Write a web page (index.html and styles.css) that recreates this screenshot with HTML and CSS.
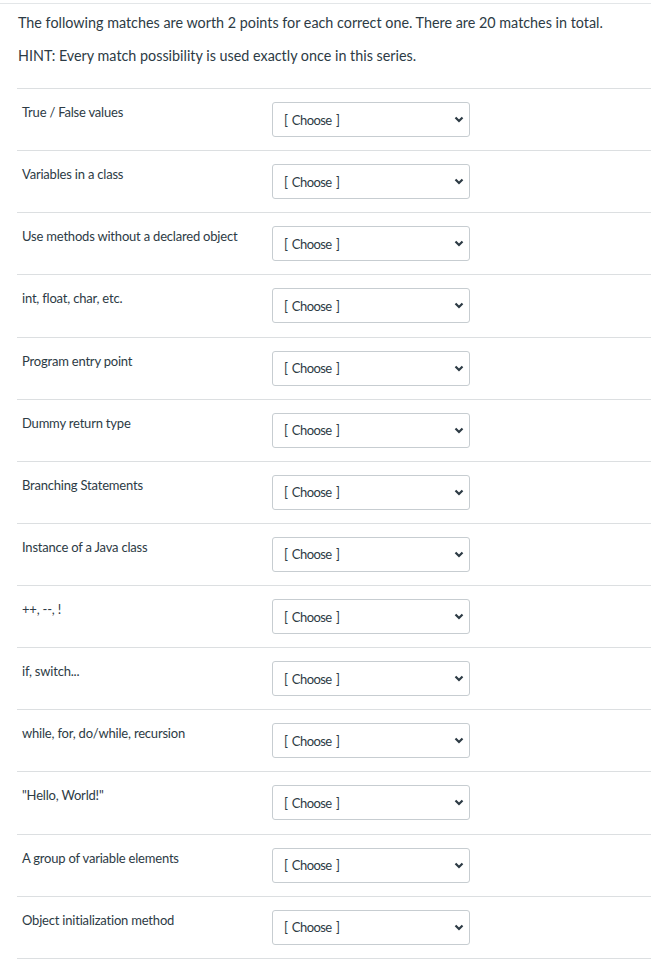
FILE: index.html
```html
<!DOCTYPE html>
<html>
<head>
<meta charset="utf-8">
<link rel="stylesheet" href="styles.css">
</head>
<body>
<div class="question">
  <div class="text">
    <p>The following matches are worth 2 points for each correct one. There are 20 matches in total.</p>
    <p>HINT: Every match possibility is used exactly once in this series.</p>
  </div>
  <div class="answers">
    <div class="row"><div class="label">True / False values</div><div class="select"><span>[ Choose ]</span><svg width="10" height="7" viewBox="0 0 10 7"><path d="M1.5 1.5 L5 5 L8.5 1.5" fill="none" stroke="#2d3b45" stroke-width="2.2"/></svg></div></div>
    <div class="row"><div class="label">Variables in a class</div><div class="select"><span>[ Choose ]</span><svg width="10" height="7" viewBox="0 0 10 7"><path d="M1.5 1.5 L5 5 L8.5 1.5" fill="none" stroke="#2d3b45" stroke-width="2.2"/></svg></div></div>
    <div class="row"><div class="label">Use methods without a declared object</div><div class="select"><span>[ Choose ]</span><svg width="10" height="7" viewBox="0 0 10 7"><path d="M1.5 1.5 L5 5 L8.5 1.5" fill="none" stroke="#2d3b45" stroke-width="2.2"/></svg></div></div>
    <div class="row"><div class="label">int, float, char, etc.</div><div class="select"><span>[ Choose ]</span><svg width="10" height="7" viewBox="0 0 10 7"><path d="M1.5 1.5 L5 5 L8.5 1.5" fill="none" stroke="#2d3b45" stroke-width="2.2"/></svg></div></div>
    <div class="row"><div class="label">Program entry point</div><div class="select"><span>[ Choose ]</span><svg width="10" height="7" viewBox="0 0 10 7"><path d="M1.5 1.5 L5 5 L8.5 1.5" fill="none" stroke="#2d3b45" stroke-width="2.2"/></svg></div></div>
    <div class="row"><div class="label">Dummy return type</div><div class="select"><span>[ Choose ]</span><svg width="10" height="7" viewBox="0 0 10 7"><path d="M1.5 1.5 L5 5 L8.5 1.5" fill="none" stroke="#2d3b45" stroke-width="2.2"/></svg></div></div>
    <div class="row"><div class="label">Branching Statements</div><div class="select"><span>[ Choose ]</span><svg width="10" height="7" viewBox="0 0 10 7"><path d="M1.5 1.5 L5 5 L8.5 1.5" fill="none" stroke="#2d3b45" stroke-width="2.2"/></svg></div></div>
    <div class="row"><div class="label">Instance of a Java class</div><div class="select"><span>[ Choose ]</span><svg width="10" height="7" viewBox="0 0 10 7"><path d="M1.5 1.5 L5 5 L8.5 1.5" fill="none" stroke="#2d3b45" stroke-width="2.2"/></svg></div></div>
    <div class="row"><div class="label">++, --, !</div><div class="select"><span>[ Choose ]</span><svg width="10" height="7" viewBox="0 0 10 7"><path d="M1.5 1.5 L5 5 L8.5 1.5" fill="none" stroke="#2d3b45" stroke-width="2.2"/></svg></div></div>
    <div class="row"><div class="label">if, switch...</div><div class="select"><span>[ Choose ]</span><svg width="10" height="7" viewBox="0 0 10 7"><path d="M1.5 1.5 L5 5 L8.5 1.5" fill="none" stroke="#2d3b45" stroke-width="2.2"/></svg></div></div>
    <div class="row"><div class="label">while, for, do/while, recursion</div><div class="select"><span>[ Choose ]</span><svg width="10" height="7" viewBox="0 0 10 7"><path d="M1.5 1.5 L5 5 L8.5 1.5" fill="none" stroke="#2d3b45" stroke-width="2.2"/></svg></div></div>
    <div class="row"><div class="label">"Hello, World!"</div><div class="select"><span>[ Choose ]</span><svg width="10" height="7" viewBox="0 0 10 7"><path d="M1.5 1.5 L5 5 L8.5 1.5" fill="none" stroke="#2d3b45" stroke-width="2.2"/></svg></div></div>
    <div class="row"><div class="label">A group of variable elements</div><div class="select"><span>[ Choose ]</span><svg width="10" height="7" viewBox="0 0 10 7"><path d="M1.5 1.5 L5 5 L8.5 1.5" fill="none" stroke="#2d3b45" stroke-width="2.2"/></svg></div></div>
    <div class="row"><div class="label">Object initialization method</div><div class="select"><span>[ Choose ]</span><svg width="10" height="7" viewBox="0 0 10 7"><path d="M1.5 1.5 L5 5 L8.5 1.5" fill="none" stroke="#2d3b45" stroke-width="2.2"/></svg></div></div>
  </div>
</div>
</body>
</html>
```
FILE: styles.css
```css
html, body {
  margin: 0;
  padding: 0;
  background: #ffffff;
}
body {
  font-family: Lato, "Open Sans", "Liberation Sans", sans-serif;
  color: #2d3b45;
}
.question {
  margin-top: 3px;
  border-top: 1px solid #e3e6e8;
}
.text {
  padding: 0 0 0 18px;
  font-size: 14.35px;
  line-height: 21px;
}
.text p {
  margin: 8px 0 0 0;
}
.text p + p {
  margin-top: 12px;
}
.answers {
  margin: 22px 0 0 17px;
  border-bottom: 1px solid #dcdfe1;
}
.row {
  display: flex;
  align-items: flex-start;
  height: 62.14px;
  box-sizing: border-box;
  border-top: 1px solid #dcdfe1;
}
.label {
  width: 250px;
  padding: 14px 0 0 5px;
  font-size: 13px;
  line-height: 19px;
  letter-spacing: -0.2px;
}
.select {
  margin-top: 13px;
  width: 198px;
  height: 35px;
  box-sizing: border-box;
  border: 1px solid #c7cdd1;
  border-radius: 3px;
  display: flex;
  align-items: center;
  justify-content: space-between;
  padding: 0 5px 0 11px;
  font-size: 13px;
  letter-spacing: -0.55px;
  word-spacing: 1.6px;
}
.select svg {
  display: block;
}
```
